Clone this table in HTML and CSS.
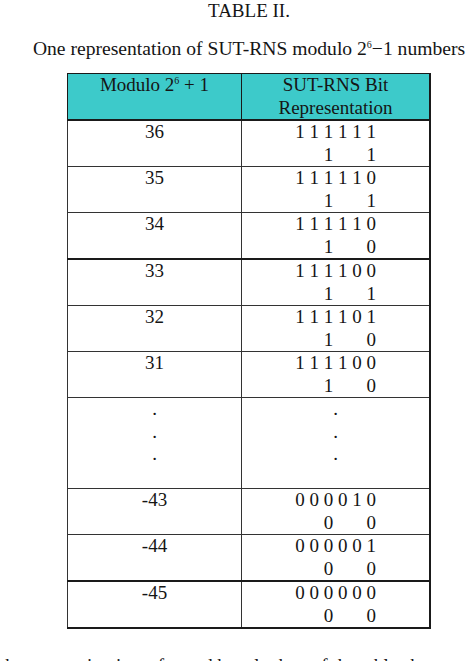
FILE: index.html
```html
<!DOCTYPE html>
<html>
<head>
<meta charset="utf-8">
<link rel="stylesheet" href="styles.css">
</head>
<body>
<div class="page">
  <div class="title">TABLE II.</div>
  <div class="caption">One representation of SUT-RNS modulo 2<sup>6</sup>&minus;1 numbers</div>
  <table class="tbl">
    <thead>
      <tr>
        <th class="col-a">Modulo 2<sup>6</sup> + 1</th>
        <th class="col-b">SUT-RNS Bit<br>Representation</th>
      </tr>
    </thead>
    <tbody>
<tr><td>36</td><td><span class="bits">1 1 1 1 1 1
      1       1</span></td></tr>
<tr><td>35</td><td><span class="bits">1 1 1 1 1 0
      1       1</span></td></tr>
<tr><td>34</td><td><span class="bits">1 1 1 1 1 0
      1       0</span></td></tr>
<tr class="thick"><td>33</td><td><span class="bits">1 1 1 1 0 0
      1       1</span></td></tr>
<tr><td>32</td><td><span class="bits">1 1 1 1 0 1
      1       0</span></td></tr>
<tr><td>31</td><td><span class="bits">1 1 1 1 0 0
      1       0</span></td></tr>
<tr class="dots"><td>.<br>.<br>.</td><td>.<br>.<br>.</td></tr>
<tr><td>-43</td><td><span class="bits">0 0 0 0 1 0
      0       0</span></td></tr>
<tr><td>-44</td><td><span class="bits">0 0 0 0 0 1
      0       0</span></td></tr>
<tr class="thick"><td>-45</td><td><span class="bits">0 0 0 0 0 0
      0       0</span></td></tr>
    </tbody>
  </table>
</div>
<p class="after">the conversion is performed by a lookup of the table above, and the bits in the lower row of each entry</p>
</body>
</html>
```
FILE: styles.css
```css
html, body {
  margin: 0;
  padding: 0;
  background: #ffffff;
}
body {
  font-family: "Liberation Serif", "Times New Roman", serif;
  color: #151515;
  font-size: 19px;
  overflow: hidden;
  width: 474px;
  height: 661px;
}
.page {
  padding-left: 24px;
  width: 450px;
}
.title {
  text-align: center;
  line-height: 22px;
}
.caption {
  text-align: center;
  font-size: 19.6px;
  line-height: 22px;
  margin-top: 16px;
  white-space: nowrap;
}
sup {
  font-size: 10px;
  line-height: 0;
  vertical-align: 7px;
}
.tbl {
  margin: 13px auto 0;
  border-collapse: collapse;
  width: 364px;
  border-right: 2px solid #1a1a1a;
}
.tbl th {
  background: #3dcaca;
  font-weight: normal;
  line-height: 22.5px;
  padding: 0;
  vertical-align: top;
  border: 1px solid #1a1a1a;
  border-bottom: 2px solid #1a1a1a;
}
.tbl th.col-b {
  border-right: 2px solid #1a1a1a;
}
.col-a {
  width: 173px;
}
.tbl td {
  text-align: center;
  vertical-align: top;
  line-height: 22.5px;
  height: 45px;
  padding: 0;
  border: 1px solid #333333;
}
.tbl td:last-child {
  border-right: 2px solid #1a1a1a;
}
.tbl tr.thick td {
  border-top: 2px solid #1a1a1a;
}
.tbl tbody tr:last-child td {
  border-bottom: 2px solid #1a1a1a;
}
.tbl tr.dots td {
  height: 90px;
  line-height: 22.5px;
}
.bits {
  display: inline-block;
  text-align: left;
  white-space: pre;
}
.after {
  margin: 26px 0 0;
  white-space: nowrap;
  overflow: hidden;
  line-height: 22px;
}
```
